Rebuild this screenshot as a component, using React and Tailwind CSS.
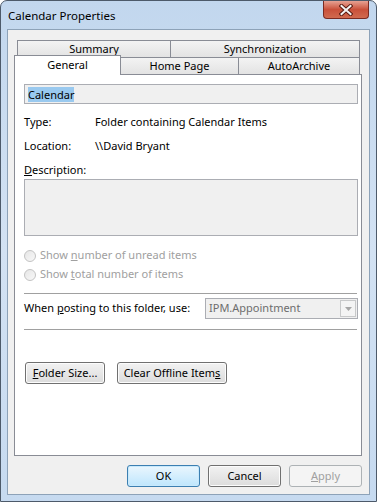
import React from 'react';

const font = { fontFamily: '"Noto Sans", "Open Sans", sans-serif' };

const Tab = ({ label, className = '' }) => (
    <div className={`h-[17px] flex items-center justify-center border border-[#898c95] border-b-0 bg-gradient-to-b from-[#f3f3f3] to-[#e3e3e3] text-[11px] text-black ${className}`}>
        {label}
    </div>
);

const Button = ({ children, className = '', disabled, primary }) => (
    <button
        type="button"
        className={`h-[22px] flex items-center justify-center rounded-[3px] border text-[11px] whitespace-nowrap ${
            disabled
                ? 'border-[#adb2b5] bg-[#f4f4f4] text-[#a0a0a0]'
                : primary
                ? 'border-[#3c7fb1] bg-gradient-to-b from-[#eaf6fd] to-[#bee6fd] text-black shadow-[inset_0_0_0_1px_#c8e9fc]'
                : 'border-[#707070] bg-gradient-to-b from-[#f2f2f2] to-[#dcdcdc] text-black shadow-[inset_0_0_0_1px_#fcfcfc]'
        } ${className}`}
    >
        {children}
    </button>
);

const Radio = ({ children }) => (
    <div className="flex items-center h-[19px] text-[11px] text-[#a0a0a0]">
        <span className="w-[12px] h-[12px] rounded-full border border-[#c3c3c3] bg-gradient-to-br from-[#e6e6e6] to-[#f8f8f8] mr-[4px]" />
        <span className="whitespace-pre">{children}</span>
    </div>
);

export default function App() {
    return (
        <div style={font} className="w-[377px] h-[502px] flex flex-col rounded-t-[7px] border border-[#4d5a6a] bg-gradient-to-b from-[#c2d7ee] via-[#d3e2f3] to-[#c6daf0] overflow-hidden">
            {/* title bar */}
            <div className="h-[28px] flex items-start justify-between shrink-0">
                <span className="text-[11.5px] text-black pl-[7px] pt-[6px]">Calendar Properties</span>
                <div className="w-[46px] h-[18px] mr-[7px] rounded-b-[4px] border border-t-0 border-[#7a2b22] bg-gradient-to-b from-[#e6a193] via-[#c9503a] to-[#d06a4f] flex items-center justify-center">
                    <svg width="14" height="12" viewBox="0 0 14 12">
                        <path d="M2.5 2 L11.5 10 M11.5 2 L2.5 10" stroke="#5a1b12" strokeWidth="4" strokeLinecap="square" />
                        <path d="M2.5 2 L11.5 10 M11.5 2 L2.5 10" stroke="#f4f4f4" strokeWidth="2" strokeLinecap="square" />
                    </svg>
                </div>
            </div>

            {/* client area */}
            <div className="flex-1 mx-[6px] mb-[6px] border border-[#8da2b8] bg-[#f0f0f0] flex flex-col">
                <div className="pl-[6px] pr-[7px] pt-[10px] flex flex-col">
                    {/* tabs */}
                    <div className="flex pl-[3px] pr-[2px]">
                        <Tab label="Summary" className="w-[154px]" />
                        <Tab label="Synchronization" className="flex-1 -ml-px" />
                    </div>
                    <div className="flex items-end pr-[2px] relative z-10">
                        <div className="w-[107px] h-[20px] -mt-[2px] -mb-px border border-[#898c95] border-b-0 bg-white flex justify-center pt-[1px] text-[11px] text-black">
                            General
                        </div>
                        <Tab label="Home Page" className="w-[119px] -ml-px" />
                        <Tab label="AutoArchive" className="flex-1 -ml-px" />
                    </div>

                    {/* panel */}
                    <div className="h-[382px] border border-[#898c95] bg-white pl-[9px] pr-[3px] pt-[9px] text-[11px] text-black">
                        <div className="h-[20px] border border-[#abadb3] bg-[#f0f0f0] flex items-center pl-[3px]">
                            <span className="bg-[#99c9ef] leading-[15px]">Calendar</span>
                        </div>

                        <div className="flex h-[16px] items-center mt-[10px]">
                            <span className="w-[71px]">Type:</span>
                            <span>Folder containing Calendar Items</span>
                        </div>
                        <div className="flex h-[16px] items-center mt-[8px]">
                            <span className="w-[71px]">Location:</span>
                            <span>\\David Bryant</span>
                        </div>
                        <div className="flex h-[16px] items-center mt-[8px]">
                            <span><span className="underline">D</span>escription:</span>
                        </div>
                        <div className="h-[57px] mt-[1px] border border-[#abadb3] bg-[#f0f0f0]" />

                        <div className="mt-[10px] flex flex-col">
                            <Radio>Show <span className="underline">n</span>umber of unread items</Radio>
                            <Radio>Show <span className="underline">t</span>otal number of items</Radio>
                        </div>

                        <div className="mt-[9px] mr-[1px] h-[2px] border-t border-[#a0a0a0] border-b-white border-b" />

                        <div className="mt-[3px] flex items-center justify-between">
                            <span className="whitespace-nowrap">When <span className="underline">p</span>osting to this folder, use:</span>
                            <div className="w-[153px] h-[21px] border border-[#abadb3] bg-[#f0f0f0] flex items-center">
                                <span className="flex-1 pl-[3px] text-[#6d6d6d]">IPM.Appointment</span>
                                <div className="w-[16px] h-[17px] mr-[1px] border border-[#c8c9ca] bg-[#f4f4f4] flex items-center justify-center">
                                    <svg width="7" height="4" viewBox="0 0 7 4"><path d="M0 0 H7 L3.5 4 Z" fill="#a6a6a6" /></svg>
                                </div>
                            </div>
                        </div>

                        <div className="mt-[10px] mr-[1px] h-[2px] border-t border-[#a0a0a0] border-b-white border-b" />

                        <div className="mt-[31px] flex gap-[12px] pl-px">
                            <Button className="w-[80px]"><span><span className="underline">F</span>older Size...</span></Button>
                            <Button className="w-[110px]"><span>Clear Offline Item<span className="underline">s</span></span></Button>
                        </div>
                    </div>
                </div>

                {/* bottom buttons */}
                <div className="flex justify-end gap-[8px] pr-[7px] mt-[9px]">
                    <Button primary className="w-[73px]">OK</Button>
                    <Button className="w-[73px]">Cancel</Button>
                    <Button disabled className="w-[73px]"><span><span className="underline">A</span>pply</span></Button>
                </div>
            </div>
        </div>
    );
}
